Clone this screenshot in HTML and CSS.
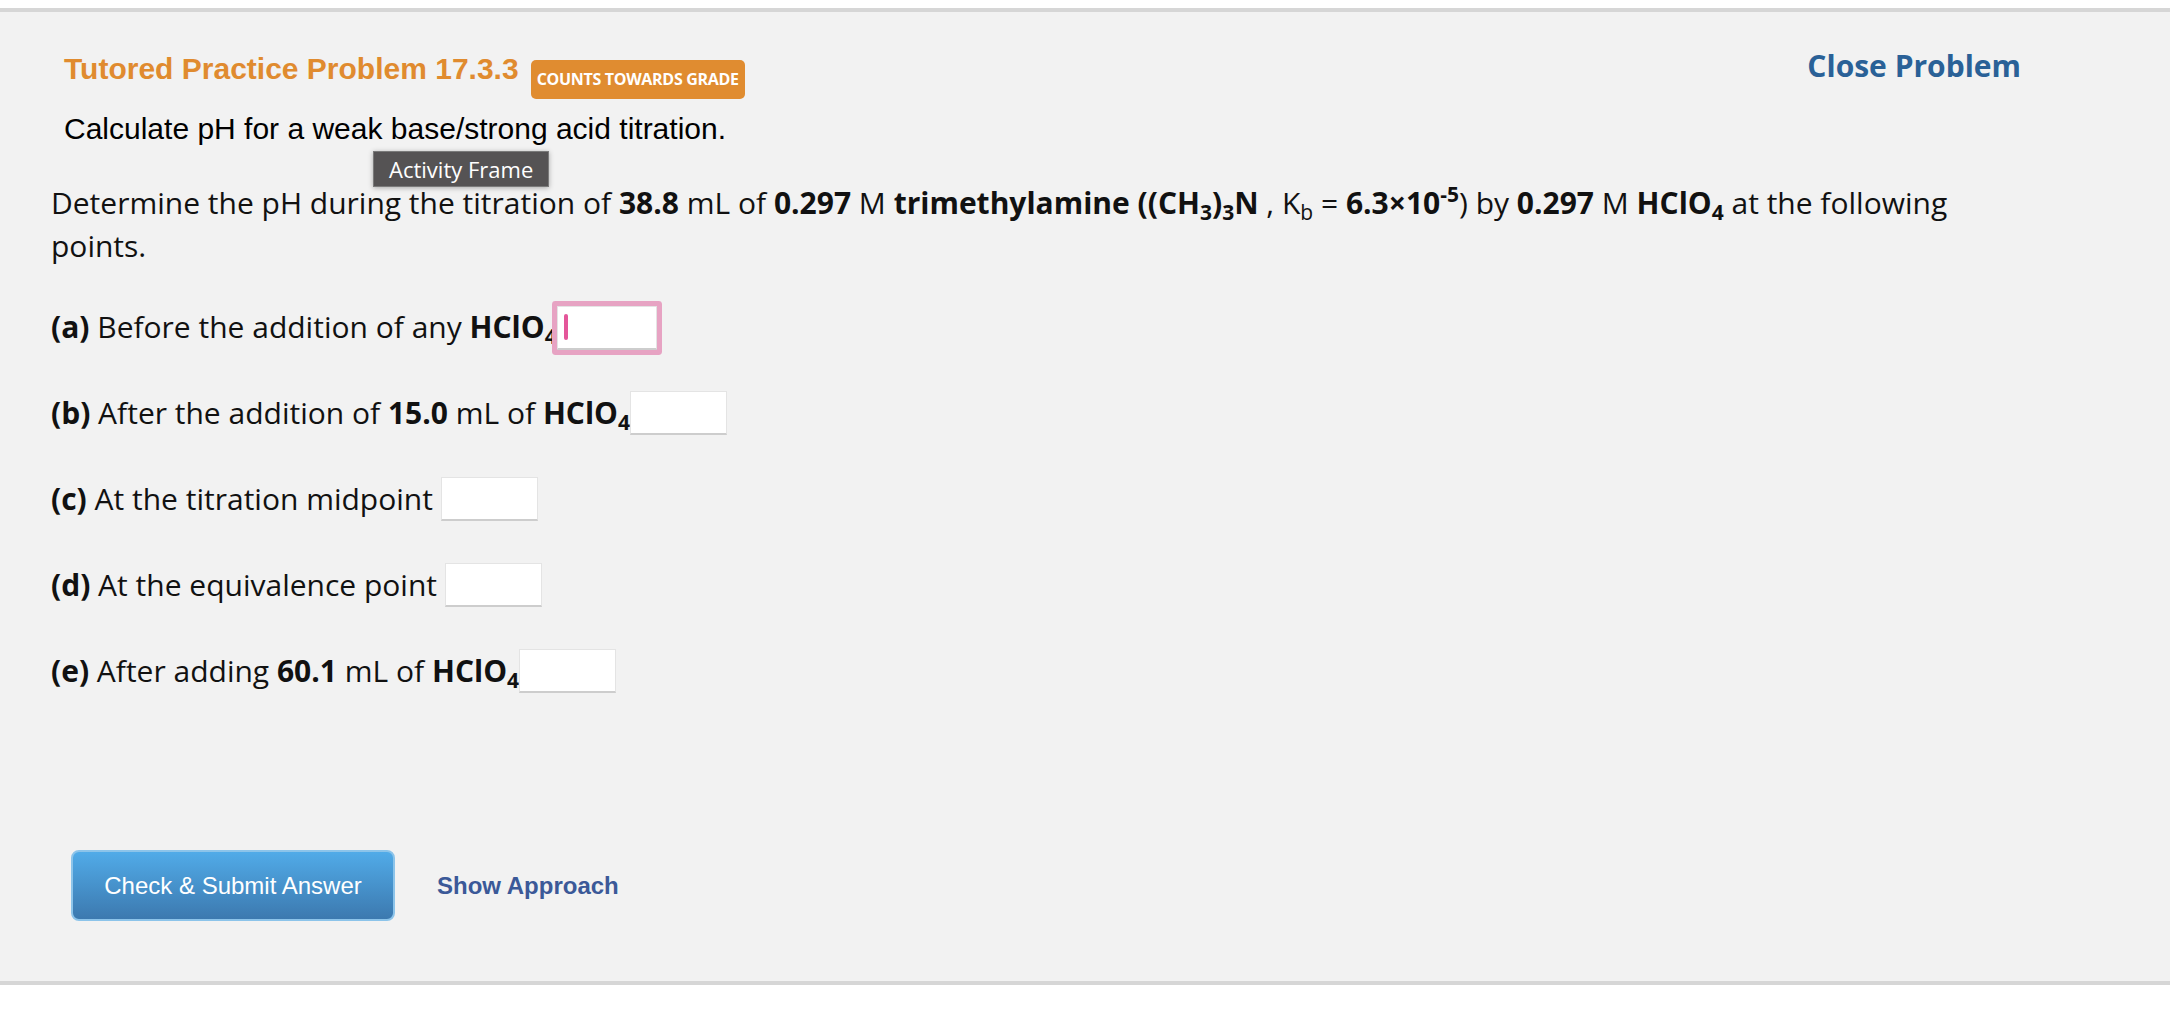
FILE: index.html
```html
<!DOCTYPE html>
<html>
<head>
<meta charset="utf-8">
<link rel="stylesheet" href="styles.css">
</head>
<body>
<div class="frame">
  <div class="header">
    <div class="title-wrap">
      <span class="title">Tutored Practice Problem 17.3.3</span>
      <span class="badge">COUNTS TOWARDS GRADE</span>
    </div>
    <a class="close">Close Problem</a>
  </div>
  <div class="subtitle">Calculate pH for a weak base/strong acid titration.</div>
  <div class="activity">
    <span class="tooltip">Activity Frame</span>
    <p class="question"><span>Determine the pH during the titration of <b>38.8</b> mL of <b>0.297</b> M <b>trimethylamine</b> <b>((CH<sub>3</sub>)<sub>3</sub>N</b> , K<sub>b</sub> = <b>6.3×10<sup>-5</sup></b>) by <b>0.297</b> M <b>HClO<sub>4</sub></b> at the following</span><br><span>points.</span></p>
    <div class="row"><b>(a)</b> Before the addition of any <b>HClO<sub>4</sub></b><span class="input focused"><span class="caret"></span></span></div>
    <div class="row"><b>(b)</b> After the addition of <b>15.0</b> mL of <b>HClO<sub>4</sub></b><span class="input"></span></div>
    <div class="row"><b>(c)</b> At the titration midpoint <span class="input"></span></div>
    <div class="row"><b>(d)</b> At the equivalence point <span class="input"></span></div>
    <div class="row"><b>(e)</b> After adding <b>60.1</b> mL of <b>HClO<sub>4</sub></b><span class="input"></span></div>
  </div>
  <div class="actions">
    <button class="submit">Check &amp; Submit Answer</button>
    <a class="approach">Show Approach</a>
  </div>
</div>
</body>
</html>
```
FILE: styles.css
```css
html, body {
  margin: 0;
  padding: 0;
  background: #ffffff;
}
.frame {
  margin-top: 8px;
  height: 977px;
  box-sizing: border-box;
  border-top: 4px solid #d6d6d6;
  border-bottom: 4px solid #d6d6d6;
  background: #f2f2f2;
  position: relative;
}
.header {
  display: flex;
  justify-content: space-between;
  align-items: flex-start;
  padding: 37px 149px 0 64px;
  height: 40px;
}
.title-wrap {
  display: flex;
  align-items: flex-end;
  height: 40px;
}
.title {
  font-family: "Liberation Sans", Arial, sans-serif;
  font-weight: bold;
  font-size: 30px;
  line-height: 40px;
  color: #e08b2f;
}
.badge {
  display: inline-block;
  margin-left: 12px;
  margin-bottom: -10px;
  background: #e08c30;
  color: #fff;
  font-family: "Open Sans", sans-serif;
  font-weight: bold;
  font-size: 16px;
  line-height: 39px;
  height: 39px;
  padding: 0 6px;
  border-radius: 5px;
  letter-spacing: -0.3px;
}
.close {
  font-family: "Open Sans", sans-serif;
  font-weight: bold;
  font-size: 30px;
  line-height: 40px;
  color: #2a6197;
  margin-top: -3px;
}
.subtitle {
  font-family: "Liberation Sans", Arial, sans-serif;
  font-size: 30px;
  line-height: 40px;
  color: #000;
  padding-left: 64px;
  margin-top: 20px;
}
.activity {
  position: relative;
  padding-left: 51px;
  margin-top: 32px;
  font-family: "Open Sans", sans-serif;
  font-size: 30px;
  color: #111;
}
.tooltip {
  position: absolute;
  left: 373px;
  top: -30px;
  height: 36px;
  box-sizing: border-box;
  background: #555354;
  color: #fff;
  font-family: "Open Sans", sans-serif;
  font-size: 22px;
  line-height: 34px;
  padding: 0 15px;
  border: 1px solid #7a7a7a;
  box-shadow: 0 1px 5px rgba(0,0,0,0.3);
  z-index: 2;
}
.question {
  margin: 0;
  line-height: 43px;
}
sub, sup {
  font-size: 70%;
  line-height: 0;
  position: relative;
}
sub { vertical-align: -0.3em; }
sup { vertical-align: 0.55em; }
.row {
  display: flex;
  align-items: center;
  height: 44px;
  line-height: 44px;
  margin-top: 42px;
  white-space: pre;
}
.question + .row {
  margin-top: 38px;
}
.input {
  display: inline-block;
  position: relative;
  width: 97px;
  height: 44px;
  box-sizing: border-box;
  background: #fff;
  border: 1px solid #e4e4e4;
  border-bottom: 2px solid #cdcdcd;
}
.input.focused {
  width: 100px;
  margin-top: 2px;
  border-radius: 1px;
  box-shadow: 0 0 0 5px #e7a3c3;
}
.caret {
  position: absolute;
  left: 6px;
  top: 7px;
  width: 4px;
  height: 26px;
  border-radius: 2px;
  background: #e4569a;
}
.actions {
  display: flex;
  align-items: center;
  padding-left: 71px;
  position: absolute;
  top: 838px;
  left: 0;
}
.submit {
  width: 324px;
  height: 71px;
  border-radius: 8px;
  border: 2px solid #8cc4ea;
  background: linear-gradient(#51abe8, #3c79af);
  color: #fff;
  font-family: "Liberation Sans", Arial, sans-serif;
  font-size: 24px;
  padding: 0;
}
.approach {
  margin-left: 42px;
  font-family: "Liberation Sans", Arial, sans-serif;
  font-weight: bold;
  font-size: 24px;
  color: #3b5998;
}
```
